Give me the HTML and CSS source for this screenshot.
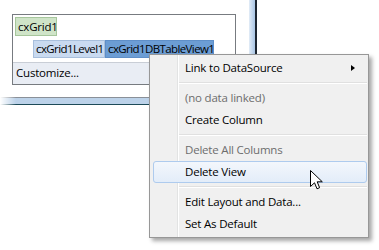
FILE: index.html
```html
<!DOCTYPE html>
<html>
<head>
<meta charset="utf-8">
<link rel="stylesheet" href="styles.css">
</head>
<body>
<div class="frame">
  <div class="panel">
    <div class="root-row"><span class="grid-box">cxGrid1</span></div>
    <div class="level-row"><span class="level-box">cxGrid1Level1</span><span class="view-box">cxGrid1DBTableView1</span></div>
    <div class="customize">Customize...</div>
  </div>
</div>

<div class="menu">
  <div class="item">Link to DataSource<span class="arrow"></span></div>
  <div class="sep"></div>
  <div class="item disabled">(no data linked)</div>
  <div class="item">Create Column</div>
  <div class="sep"></div>
  <div class="item disabled">Delete All Columns</div>
  <div class="item hot">Delete View</div>
  <div class="sep"></div>
  <div class="item">Edit Layout and Data...</div>
  <div class="item">Set As Default</div>
</div>

<svg class="cursor" width="14" height="21" viewBox="0 0 14 21">
  <path d="M0.5 0.5 L0.5 16.5 L4.5 12.8 L7 18.8 L9.6 17.7 L7.2 11.8 L12.3 11.8 Z" fill="#fff" stroke="#000" stroke-width="1" stroke-linejoin="miter"/>
</svg>
</body>
</html>
```

FILE: styles.css
```css
html, body {
  margin: 0;
  padding: 0;
}
body {
  width: 379px;
  height: 250px;
  overflow: hidden;
  position: relative;
  background: #fff;
  font-family: "Open Sans", "Noto Sans", sans-serif;
  font-size: 11.5px;
  letter-spacing: -0.2px;
  color: #000;
  white-space: nowrap;
}
.frame {
  width: 257px;
  height: 105px;
  box-sizing: border-box;
  padding: 14px 0 0 12px;
  background:
    linear-gradient(to right, #fff, rgba(255,255,255,0) 16px) left bottom / 100% 8px no-repeat,
    linear-gradient(to bottom, #8a9098 0 1px, #bcd2e9 1px 7px, #1d4a58 7px 8px) left bottom / 100% 8px no-repeat,
    linear-gradient(to right, #e2ecf7 0, #aac6e5 6px, #1c2530 6px 8px) right top / 8px 100% no-repeat,
    #fff;
}
.panel {
  width: 224px;
  height: 71px;
  box-sizing: border-box;
  border: 1px solid #777b80;
  background: #fff;
  display: flex;
  flex-direction: column;
}
.root-row {
  display: flex;
  padding: 2px 0 0 2px;
}
.grid-box {
  height: 19px;
  width: 42px;
  box-sizing: border-box;
  line-height: 17px;
  padding: 0 2px;
  border: 1px solid #a6c69c;
  background: #cfe4c8;
}
.level-row {
  display: flex;
  margin-top: 4px;
  padding-left: 20px;
}
.level-box, .view-box {
  height: 18px;
  box-sizing: border-box;
  line-height: 16px;
  padding: 0 2px;
  border: 1px solid #a8bfdc;
  letter-spacing: -0.6px;
}
.level-box {
  width: 72px;
  background: #c9daf0;
}
.view-box {
  width: 109px;
  background: #6c9dd4;
  border-color: #5f8fc8;
}
.customize {
  margin-top: auto;
  height: 22px;
  box-sizing: border-box;
  border-top: 1px solid #c9ced6;
  background: #e9edf4;
  line-height: 20px;
  padding-left: 3px;
}
.menu {
  position: absolute;
  left: 149px;
  top: 54px;
  width: 220px;
  height: 184px;
  box-sizing: border-box;
  border: 1px solid #979797;
  background:
    linear-gradient(to right, transparent 27px, #e2e3e3 27px 28px, #fff 28px 29px, transparent 29px) 0 0 / 100% 100% no-repeat,
    #f0f0f0;
  padding: 2px 1px 2px 3px;
  box-shadow: 3px 3px 4px rgba(0,0,0,0.35);
}
.item {
  position: relative;
  height: 22px;
  box-sizing: border-box;
  line-height: 20px;
  padding-left: 31px;
  border: 1px solid transparent;
  border-radius: 3px;
}
.item.disabled {
  color: #6d6d6d;
}
.item.hot {
  border-color: #aecbee;
  background: linear-gradient(to bottom, #f3f7fc, #e3edf9);
}
.arrow {
  position: absolute;
  right: 11px;
  top: 7px;
  width: 0;
  height: 0;
  border-top: 3.5px solid transparent;
  border-bottom: 3.5px solid transparent;
  border-left: 4px solid #000;
}
.sep {
  height: 8px;
  margin-left: 26px;
  background: linear-gradient(to bottom, transparent 3px, #e0e0e0 3px 4px, #fff 4px 5px, transparent 5px);
}
.cursor {
  position: absolute;
  left: 310px;
  top: 170px;
}
```
